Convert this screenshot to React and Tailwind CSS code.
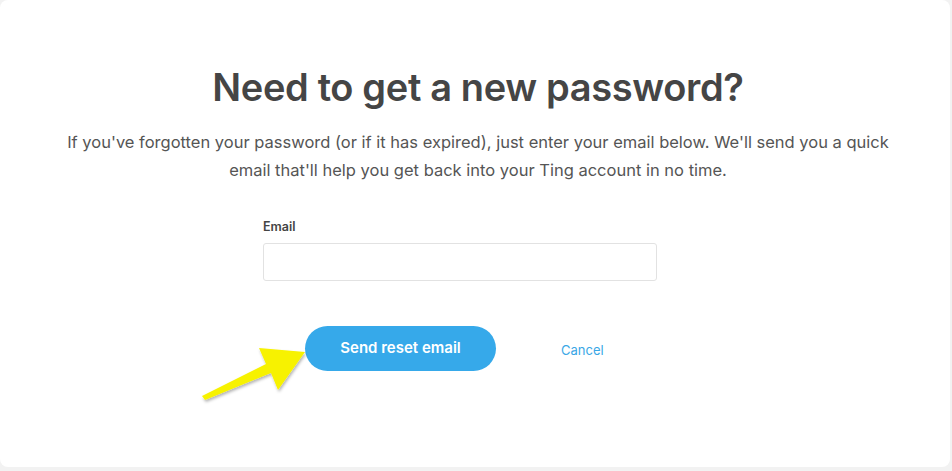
export default function App() {
  return (
    <div className="relative w-[952px] h-[471px] bg-[#f2f2f2] overflow-hidden" style={{ fontFamily: "Inter, 'Liberation Sans', sans-serif" }}>
      <div className="w-[950px] h-[467px] bg-white rounded-lg flex flex-col items-center pl-[6px]">
        <h1 className="mt-[63px] text-[38px] leading-[48px] font-semibold text-[#454545] tracking-[-0.35px]">Need to get a new password?</h1>
        <p className="mt-[17px] w-[860px] text-center text-[16.5px] leading-[28px] text-[#555]">
          If you've forgotten your password (or if it has expired), just enter your email below. We'll send you a quick email that'll help you get back into your Ting account in no time.
        </p>
        <div className="mt-[35px] w-[394px] ml-[-36px] flex flex-col">
          <label className="text-[12.5px] leading-[16px] font-semibold text-[#444]">Email</label>
          <input className="mt-[8px] h-[38px] border border-[#e2e2e2] rounded-[3px] px-3 outline-none" />
          <div className="mt-[45px] flex items-center">
            <button className="ml-[42px] w-[191px] h-[45px] rounded-full bg-[#36a9ea] text-white text-[15px] font-semibold">Send reset email</button>
            <a className="ml-[65px] mt-[4px] text-[13px] text-[#3aa7e6]">Cancel</a>
          </div>
        </div>
      </div>
      <svg className="absolute left-0 top-0 pointer-events-none" width="952" height="471" viewBox="0 0 952 471">
        <defs>
          <filter id="sh" x="-20%" y="-20%" width="140%" height="140%">
            <feDropShadow dx="1" dy="2" stdDeviation="1.5" floodColor="#000" floodOpacity="0.3" />
          </filter>
        </defs>
        <polygon filter="url(#sh)" fill="#f7f200" points="305,352 259,348 266,364 202,396 205,400 271,373 278,390" />
      </svg>
    </div>
  );
}
